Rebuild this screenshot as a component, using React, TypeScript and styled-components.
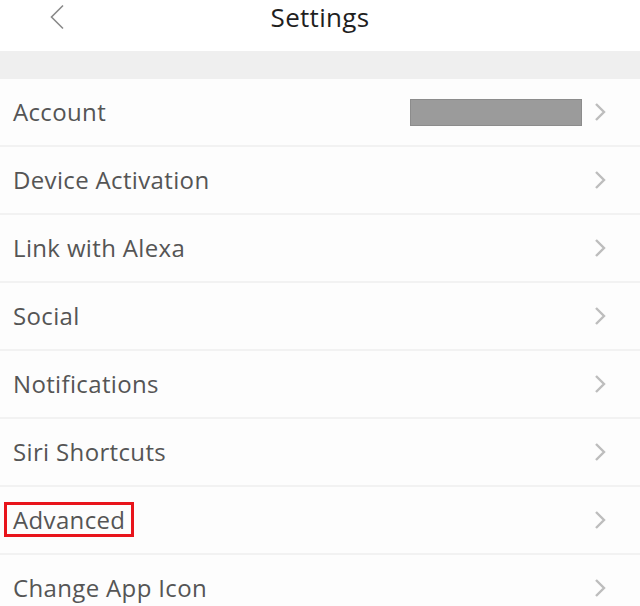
import React from "react";
import styled, { createGlobalStyle } from "styled-components";

const GlobalStyle = createGlobalStyle`
  html, body {
    margin: 0;
    padding: 0;
    background: #fdfdfd;
  }
  body {
    font-family: "Open Sans", "Liberation Sans", sans-serif;
    -webkit-font-smoothing: antialiased;
  }
`;

interface RowProps {
  label: string;
  redacted?: boolean;
  highlighted?: boolean;
}

const items: RowProps[] = [
  { label: "Account", redacted: true },
  { label: "Device Activation" },
  { label: "Link with Alexa" },
  { label: "Social" },
  { label: "Notifications" },
  { label: "Siri Shortcuts" },
  { label: "Advanced", highlighted: true },
  { label: "Change App Icon" },
];

const Chevron = ({ left }: { left?: boolean }) =>
  left ? (
    <svg width="16" height="26" viewBox="0 0 16 26">
      <path d="M14 1.5 L2.5 13 L14 24.5" fill="none" stroke="#8a8a8a" strokeWidth="1.6" />
    </svg>
  ) : (
    <svg width="12" height="20" viewBox="0 0 12 20">
      <path d="M2 2 L10 10 L2 18" fill="none" stroke="#bdbdbd" strokeWidth="2.4" />
    </svg>
  );

const SettingsRow = ({ label, redacted, highlighted }: RowProps) => (
  <Row>
    <Label $highlighted={highlighted}>{label}</Label>
    <Trailing>
      {redacted && <Redacted />}
      <Chevron />
    </Trailing>
  </Row>
);

const App = () => (
  <>
    <GlobalStyle />
    <Page>
      <Header>
        <BackButton>
          <Chevron left />
        </BackButton>
        <Title>Settings</Title>
      </Header>
      <Band />
      <List>
        {items.map((item) => (
          <SettingsRow key={item.label} {...item} />
        ))}
      </List>
    </Page>
  </>
);

const Page = styled.div`
  width: 640px;
  height: 606px;
  overflow: hidden;
  background: #fdfdfd;
`;

const Header = styled.header`
  position: relative;
  height: 51px;
  display: flex;
  align-items: center;
  justify-content: center;
  background: #fff;
`;

const BackButton = styled.div`
  position: absolute;
  left: 49px;
  top: 4px;
  display: flex;
`;

const Title = styled.h1`
  margin: 0 0 17px;
  font-size: 26px;
  font-weight: 400;
  color: #1f1f1f;
  letter-spacing: 0.3px;
`;

const Band = styled.div`
  height: 28px;
  background: #efefef;
`;

const List = styled.div`
  display: flex;
  flex-direction: column;
`;

const Row = styled.div`
  height: 66px;
  border-bottom: 2px solid #f2f2f2;
  display: flex;
  align-items: center;
  justify-content: space-between;
  padding: 0 34px 0 13px;
`;

const Label = styled.span<{ $highlighted?: boolean }>`
  font-size: 24px;
  color: #555;
  line-height: 29px;
  letter-spacing: 0.35px;
  margin-bottom: 2px;
  ${({ $highlighted }) =>
    $highlighted &&
    `
    padding: 0 6px;
    margin-left: -6px;
    outline: 3px solid #e8141b;
    outline-offset: 0;
  `}
`;

const Trailing = styled.div`
  display: flex;
  align-items: center;
  gap: 12px;
`;

const Redacted = styled.div`
  width: 172px;
  height: 27px;
  background: #9b9b9b;
  border: 1px solid #8c8c8c;
  box-sizing: border-box;
`;

export default App;
